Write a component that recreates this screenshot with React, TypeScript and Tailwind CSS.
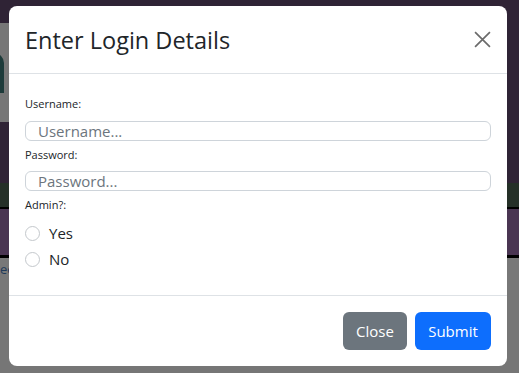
import React from 'react';

const App = () => {
  return (
    <div className="relative h-[373px] w-[519px] overflow-hidden bg-[#777777] font-['Open_Sans',sans-serif]">
      {/* dimmed page behind the modal */}
      <div className="flex h-full flex-col">
        <div className="h-[23px] bg-[#2f2335]" />
        <div className="flex h-[160px] bg-[#2f2335]">
          <div className="relative h-[99px] w-[12px] bg-[#777777]">
            <div className="absolute left-[-10px] top-[30px] h-[40px] w-[14px] rounded-tr-[10px] border-r-[5px] border-t-[5px] border-[#1d3b3a]" />
          </div>
        </div>
        <div className="h-[24px] bg-[#253028]" />
        <div className="h-[2px] bg-black" />
        <div className="h-[46px] bg-[#4a3552]" />
        <div className="h-[3px] bg-black" />
        <div className="h-[32px] bg-[#787878] pt-[5px] text-[13px] leading-none text-[#1f3a5a]">
          <span>ee</span>
        </div>
        <div className="flex-1 bg-[#767676]" />
      </div>

      {/* modal */}
      <div className="absolute left-[9px] top-[6px] flex h-[360px] w-[498px] flex-col rounded-[8px] bg-white text-[#212529]">
        <div className="flex h-[68px] items-center justify-between border-b border-[#dee2e6] px-[16px]">
          <h5 className="pt-[3px] text-[23.5px] font-medium leading-none">Enter Login Details</h5>
          <button type="button" className="flex h-[18px] w-[18px] items-center justify-center text-[#6b6b6b]">
            <svg width="17" height="17" viewBox="0 0 16 16" fill="none" stroke="currentColor" strokeWidth="1.6">
              <path d="M1 1 L15 15 M15 1 L1 15" />
            </svg>
          </button>
        </div>

        <div className="flex h-[222px] flex-col border-b border-[#dee2e6] px-[16px] pt-[23px]">
          <label className="text-[11px] leading-[14px]">Username:</label>
          <input
            type="text"
            placeholder="Username..."
            className="mt-[10px] h-[20px] w-full rounded-[6px] border border-[#ced4da] px-[12px] text-[15px] leading-none placeholder:text-[#6c757d] focus:outline-none"
          />
          <label className="mt-[7px] text-[11px] leading-[14px]">Password:</label>
          <input
            type="password"
            placeholder="Password..."
            className="mt-[9px] h-[20px] w-full rounded-[6px] border border-[#ced4da] px-[12px] text-[15px] leading-none placeholder:text-[#6c757d] focus:outline-none"
          />
          <label className="mt-[7px] text-[11px] leading-[14px]">Admin?:</label>
          <div className="mt-[11px] flex items-center gap-[9px]">
            <span className="h-[15px] w-[15px] rounded-full border border-[#c4c8cc] bg-white" />
            <span className="text-[15px] leading-[20px]">Yes</span>
          </div>
          <div className="mt-[6px] flex items-center gap-[9px]">
            <span className="h-[15px] w-[15px] rounded-full border border-[#c4c8cc] bg-white" />
            <span className="text-[15px] leading-[20px]">No</span>
          </div>
        </div>

        <div className="flex flex-1 items-start justify-end gap-[8px] px-[16px] pt-[16px]">
          <button type="button" className="h-[38px] w-[64px] rounded-[6px] bg-[#6c757d] text-[15px] text-white">
            Close
          </button>
          <button type="button" className="h-[38px] w-[76px] rounded-[6px] bg-[#0d6efd] text-[15px] text-white">
            Submit
          </button>
        </div>
      </div>
    </div>
  );
};

export default App;
